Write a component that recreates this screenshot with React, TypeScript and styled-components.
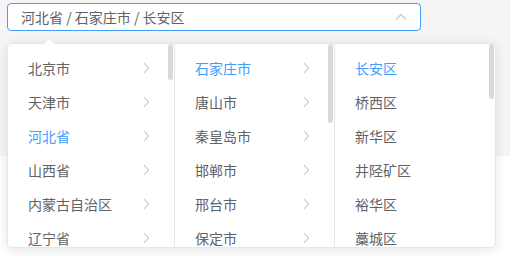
import React from 'react';
import styled, { createGlobalStyle } from 'styled-components';

const GlobalStyle = createGlobalStyle`
  body {
    margin: 0;
    background: #fff;
    font-family: "Noto Sans CJK SC", "Noto Sans", sans-serif;
  }
`;

const Page = styled.div`
  position: relative;
  width: 510px;
  height: 256px;
  overflow: hidden;
`;

const DemoBlock = styled.div`
  background: #f5f5f5;
  height: 156px;
  padding: 3px 0 0 7px;
  box-sizing: border-box;
`;

const Input = styled.div`
  width: 414px;
  height: 28px;
  box-sizing: border-box;
  border: 1px solid #409eff;
  border-radius: 4px;
  background: #fff;
  display: flex;
  align-items: center;
  padding: 0 13px 0 13px;
  font-size: 14px;
  color: #606266;
  justify-content: space-between;
`;

const Panel = styled.div`
  position: absolute;
  top: 43px;
  left: 7px;
  height: 205px;
  display: flex;
  background: #fff;
  border: 1px solid #e4e7ed;
  border-radius: 4px;
  box-shadow: 0 2px 12px 0 rgba(0, 0, 0, 0.1);
  box-sizing: border-box;
`;

const Arrow = styled.div`
  position: absolute;
  top: -6px;
  left: 35px;
  width: 0;
  height: 0;
  border-left: 6px solid transparent;
  border-right: 6px solid transparent;
  border-bottom: 6px solid #e4e7ed;
  &::after {
    content: '';
    position: absolute;
    top: 1px;
    left: -6px;
    border-left: 6px solid transparent;
    border-right: 6px solid transparent;
    border-bottom: 6px solid #fff;
  }
`;

const Menu = styled.div<{ $width: number; $last?: boolean }>`
  position: relative;
  width: ${p => p.$width}px;
  height: 100%;
  overflow: hidden;
  box-sizing: border-box;
  border-right: ${p => (p.$last ? 'none' : '1px solid #e4e7ed')};
`;

const List = styled.ul`
  margin: 0;
  padding: 7px 0 6px;
  list-style: none;
`;

const Item = styled.li<{ $active?: boolean }>`
  height: 34px;
  display: flex;
  align-items: center;
  justify-content: space-between;
  padding: 0 22px 0 20px;
  font-size: 14px;
  color: ${p => (p.$active ? '#409eff' : '#606266')};
`;

const Thumb = styled.div<{ $height: number }>`
  position: absolute;
  top: 0;
  right: 1px;
  width: 5px;
  height: ${p => p.$height}px;
  border-radius: 3px;
  background: rgba(144, 147, 153, 0.35);
`;

const Chevron = ({ up }: { up?: boolean }) => (
  <svg width="12" height="12" viewBox="0 0 12 12" fill="none">
    <path
      d={up ? 'M1 8.5 L6 3.5 L11 8.5' : 'M4 1 L8.5 6 L4 11'}
      stroke="#c0c4cc"
      strokeWidth="1.1"
    />
  </svg>
);

const provinces = ['北京市', '天津市', '河北省', '山西省', '内蒙古自治区', '辽宁省'];
const cities = ['石家庄市', '唐山市', '秦皇岛市', '邯郸市', '邢台市', '保定市'];
const districts = ['长安区', '桥西区', '新华区', '井陉矿区', '裕华区', '藁城区'];

export default function App() {
  return (
    <Page>
      <GlobalStyle />
      <DemoBlock>
        <Input>
          <span>河北省 / 石家庄市 / 长安区</span>
          <Chevron up />
        </Input>
      </DemoBlock>
      <Panel>
        <Arrow />
        <Menu $width={167}>
          <List>
            {provinces.map(p => (
              <Item key={p} $active={p === '河北省'}>
                <span>{p}</span>
                <Chevron />
              </Item>
            ))}
          </List>
          <Thumb $height={36} />
        </Menu>
        <Menu $width={160}>
          <List>
            {cities.map(c => (
              <Item key={c} $active={c === '石家庄市'}>
                <span>{c}</span>
                <Chevron />
              </Item>
            ))}
          </List>
          <Thumb $height={79} />
        </Menu>
        <Menu $width={160} $last>
          <List>
            {districts.map(d => (
              <Item key={d} $active={d === '长安区'}>
                <span>{d}</span>
              </Item>
            ))}
          </List>
          <Thumb $height={55} />
        </Menu>
      </Panel>
    </Page>
  );
}
